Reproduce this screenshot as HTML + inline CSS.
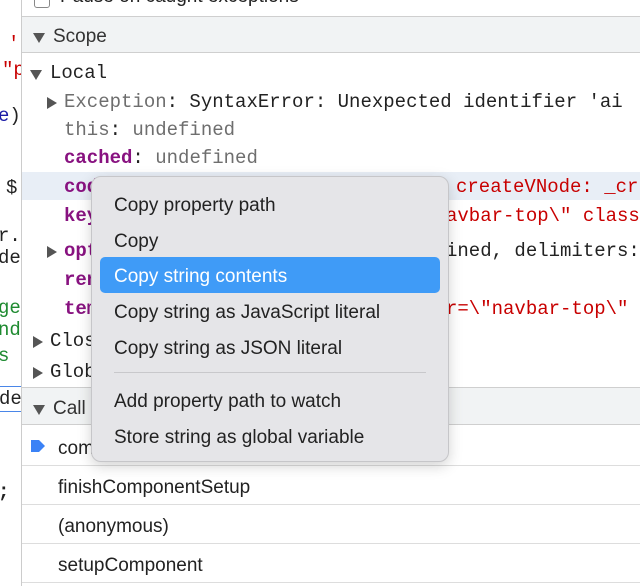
<!DOCTYPE html>
<html><head><style>
*{margin:0;padding:0;box-sizing:border-box}
body{width:640px;height:586px;overflow:hidden;background:#fff;position:relative;font-family:"Liberation Sans",sans-serif}
.a{position:absolute;white-space:nowrap}
.m{font-family:"Liberation Mono",monospace;font-size:19px;line-height:28px}
.s{font-size:19px}
.k{color:#881280;font-weight:bold}
.g{color:#6e6e6e}
.d{color:#222}
.r{color:#c80000}
.tri{display:inline-block;width:0;height:0;border-left:6px solid transparent;border-right:6px solid transparent;border-top:10px solid #555}
.tr{display:inline-block;width:0;height:0;border-top:6px solid transparent;border-bottom:6px solid transparent;border-left:10px solid #555}
.hl{position:absolute;left:22px;right:0}
</style></head><body>
<div class="a m" style="left:0;top:0;width:22px;height:586px;overflow:hidden">
<div class="a r" style="left:8px;top:30px">'</div>
<div class="a r" style="left:2px;top:56px">"p</div>
<div class="a" style="left:-2px;top:102px;color:#1a1aa6">e<span style="color:#222">)</span></div>
<div class="a d" style="left:6px;top:174px">$</div>
<div class="a d" style="left:-2px;top:222px">r.</div>
<div class="a d" style="left:-2px;top:244px">de</div>
<div class="a" style="left:-2px;top:294px;color:#1e8a30">ge</div>
<div class="a" style="left:-2px;top:316px;color:#1e8a30">nd</div>
<div class="a" style="left:-2px;top:342px;color:#1e8a30">s</div>
<div class="a d" style="left:-2px;top:386px;border:1px solid #4a86e8;line-height:24px">de</div>
<div class="a d" style="left:-2px;top:478px;font-weight:bold">;</div>
</div>
<div class="a" style="left:21px;top:0;width:1px;height:586px;background:#ccc"></div>
<div class="a" style="left:34px;top:-8px;width:16px;height:16px;border:1px solid #888;border-radius:3px;background:#fff"></div>
<div class="a s d" style="left:60px;top:-14px">Pause on caught exceptions</div>
<div class="hl" style="top:16px;height:37px;background:#f1f3f4;border-top:1px solid #cfcfcf;border-bottom:1px solid #cfcfcf"></div>
<div class="a" style="left:33px;top:30px"><span class="tri"></span></div>
<div class="a s" style="left:53px;top:26px;color:#333">Scope</div>
<div class="hl" style="top:172px;height:28px;background:#e8eef6"></div>
<div class="a" style="left:30px;top:67px"><span class="tri"></span></div>
<div class="a m d" style="left:50px;top:59px">Local</div>
<div class="a" style="left:47px;top:96px"><span class="tr"></span></div>
<div class="a m" style="left:64px;top:88px"><span class="g">Exception</span><span class="d">: SyntaxError: Unexpected identifier 'ai</span></div>
<div class="a m" style="left:64px;top:116px"><span class="g">this</span><span class="d">: </span><span class="g">undefined</span></div>
<div class="a m" style="left:64px;top:144px"><span class="k">cached</span><span class="d">: </span><span class="g">undefined</span></div>
<div class="a m" style="left:64px;top:173px"><span class="k">code</span></div>
<div class="a m r" style="left:456px;top:173px">createVNode: _cr</div>
<div class="a m" style="left:64px;top:202px"><span class="k">key</span></div>
<div class="a m r" style="left:446px;top:202px">avbar-top\" class</div>
<div class="a" style="left:47px;top:245px"><span class="tr"></span></div>
<div class="a m" style="left:64px;top:237px"><span class="k">opt</span></div>
<div class="a m d" style="left:446px;top:237px">ined, delimiters:</div>
<div class="a m" style="left:64px;top:266px"><span class="k">ren</span></div>
<div class="a m" style="left:64px;top:295px"><span class="k">tem</span></div>
<div class="a m r" style="left:446px;top:295px">r=\"navbar-top\"</div>
<div class="a" style="left:33px;top:335px"><span class="tr"></span></div>
<div class="a m d" style="left:50px;top:327px">Closure</div>
<div class="a" style="left:33px;top:366px"><span class="tr"></span></div>
<div class="a m d" style="left:50px;top:358px">Global</div>
<div class="hl" style="top:387px;height:38px;background:#f1f3f4;border-top:1px solid #cfcfcf;border-bottom:1px solid #cfcfcf"></div>
<div class="a" style="left:33px;top:402px"><span class="tri"></span></div>
<div class="a s" style="left:53px;top:398px;color:#333">Call Stack</div>
<svg class="a" style="left:30px;top:438px" width="16" height="16"><path d="M1 2h8l6 6-6 6H1z" fill="#3b82f6"/></svg>
<div class="a s d" style="left:58px;top:438px">componentSetup</div>
<div class="hl" style="top:465px;height:1px;background:#ddd"></div>
<div class="a s d" style="left:58px;top:477px">finishComponentSetup</div>
<div class="hl" style="top:504px;height:1px;background:#ddd"></div>
<div class="a s d" style="left:58px;top:516px">(anonymous)</div>
<div class="hl" style="top:543px;height:1px;background:#ddd"></div>
<div class="a s d" style="left:58px;top:555px">setupComponent</div>
<div class="hl" style="top:582px;height:1px;background:#ddd"></div>
<div class="a" style="left:91px;top:176px;width:358px;height:286px;background:#e5e5e8;border:1px solid #c6c6c9;border-radius:10px;box-shadow:0 4px 14px rgba(0,0,0,.18)"></div>
<div class="a" style="left:100px;top:257px;width:340px;height:36px;background:#3f9bf7;border-radius:5px"></div>
<div class="a s" style="left:114px;top:195px;color:#222">Copy property path</div>
<div class="a s" style="left:114px;top:231px;color:#222">Copy</div>
<div class="a s" style="left:114px;top:266px;color:#fff">Copy string contents</div>
<div class="a s" style="left:114px;top:302px;color:#222">Copy string as JavaScript literal</div>
<div class="a s" style="left:114px;top:338px;color:#222">Copy string as JSON literal</div>
<div class="a" style="left:114px;top:372px;width:312px;height:1px;background:#c8c8cb"></div>
<div class="a s" style="left:114px;top:391px;color:#222">Add property path to watch</div>
<div class="a s" style="left:114px;top:427px;color:#222">Store string as global variable</div>
</body></html>
